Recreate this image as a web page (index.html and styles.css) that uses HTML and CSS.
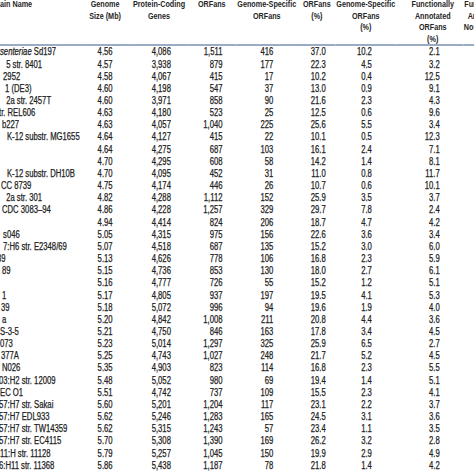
FILE: index.html
```html
<!DOCTYPE html>
<html>
<head>
<meta charset="utf-8">
<link rel="stylesheet" href="styles.css">
</head>
<body>
<table class="orf">
<colgroup>
<col class="w-strain"><col class="w-size"><col class="w-genes"><col class="w-orf"><col class="w-gs"><col class="w-pct"><col class="w-gspct"><col class="w-fa"><col class="w-fan">
</colgroup>
<thead>
<tr>
<th class="h-strain">ain Name</th>
<th>Genome<br>Size (Mb)</th>
<th>Protein-Coding<br>Genes</th>
<th>ORFans</th>
<th>Genome-Specific<br>ORFans</th>
<th>ORFans<br>(%)</th>
<th>Genome-Specific<br>ORFans<br>(%)</th>
<th class="h-fa">Functionally<br>Annotated<br>ORFans<br>(%)</th>
<th class="h-fan">Functionally<br>Annotated<br>Non-specific<br>(%)</th>
</tr>
</thead>
<tbody>
<tr><td class="s i0"><i>senteriae</i> Sd197</td><td class="c">4.56</td><td class="g">4,086</td><td class="o">1,511</td><td class="gs">416</td><td class="p">37.0</td><td class="gp">10.2</td><td class="fa">2.1</td><td></td></tr>
<tr><td class="s i6">5 str. 8401</td><td class="c">4.57</td><td class="g">3,938</td><td class="o">879</td><td class="gs">177</td><td class="p">22.3</td><td class="gp">4.5</td><td class="fa">3.2</td><td></td></tr>
<tr><td class="s i3">2952</td><td class="c">4.58</td><td class="g">4,067</td><td class="o">415</td><td class="gs">17</td><td class="p">10.2</td><td class="gp">0.4</td><td class="fa">12.5</td><td></td></tr>
<tr><td class="s i5">1 (DE3)</td><td class="c">4.60</td><td class="g">4,198</td><td class="o">547</td><td class="gs">37</td><td class="p">13.0</td><td class="gp">0.9</td><td class="fa">9.1</td><td></td></tr>
<tr><td class="s i6">2a str. 2457T</td><td class="c">4.60</td><td class="g">3,971</td><td class="o">858</td><td class="gs">90</td><td class="p">21.6</td><td class="gp">2.3</td><td class="fa">4.3</td><td></td></tr>
<tr><td class="s im1">tr. REL606</td><td class="c">4.63</td><td class="g">4,180</td><td class="o">523</td><td class="gs">25</td><td class="p">12.5</td><td class="gp">0.6</td><td class="fa">9.6</td><td></td></tr>
<tr><td class="s i2">b227</td><td class="c">4.63</td><td class="g">4,057</td><td class="o">1,040</td><td class="gs">225</td><td class="p">25.6</td><td class="gp">5.5</td><td class="fa">3.4</td><td></td></tr>
<tr><td class="s i7">K-12 substr. MG1655</td><td class="c">4.64</td><td class="g">4,127</td><td class="o">415</td><td class="gs">22</td><td class="p">10.1</td><td class="gp">0.5</td><td class="fa">12.3</td><td></td></tr>
<tr><td class="s"></td><td class="c">4.64</td><td class="g">4,275</td><td class="o">687</td><td class="gs">103</td><td class="p">16.1</td><td class="gp">2.4</td><td class="fa">7.1</td><td></td></tr>
<tr><td class="s"></td><td class="c">4.70</td><td class="g">4,295</td><td class="o">608</td><td class="gs">58</td><td class="p">14.2</td><td class="gp">1.4</td><td class="fa">8.1</td><td></td></tr>
<tr><td class="s i7">K-12 substr. DH10B</td><td class="c">4.70</td><td class="g">4,095</td><td class="o">452</td><td class="gs">31</td><td class="p">11.0</td><td class="gp">0.8</td><td class="fa">11.7</td><td></td></tr>
<tr><td class="s i1">CC 8739</td><td class="c">4.75</td><td class="g">4,174</td><td class="o">446</td><td class="gs">26</td><td class="p">10.7</td><td class="gp">0.6</td><td class="fa">10.1</td><td></td></tr>
<tr><td class="s i6">2a str. 301</td><td class="c">4.82</td><td class="g">4,288</td><td class="o">1,112</td><td class="gs">152</td><td class="p">25.9</td><td class="gp">3.5</td><td class="fa">3.7</td><td></td></tr>
<tr><td class="s i2">CDC 3083–94</td><td class="c">4.86</td><td class="g">4,228</td><td class="o">1,257</td><td class="gs">329</td><td class="p">29.7</td><td class="gp">7.8</td><td class="fa">2.4</td><td></td></tr>
<tr><td class="s"></td><td class="c">4.94</td><td class="g">4,414</td><td class="o">824</td><td class="gs">206</td><td class="p">18.7</td><td class="gp">4.7</td><td class="fa">4.2</td><td></td></tr>
<tr><td class="s i3">s046</td><td class="c">5.05</td><td class="g">4,315</td><td class="o">975</td><td class="gs">156</td><td class="p">22.6</td><td class="gp">3.6</td><td class="fa">3.4</td><td></td></tr>
<tr><td class="s i3">7:H6 str. E2348/69</td><td class="c">5.07</td><td class="g">4,518</td><td class="o">687</td><td class="gs">135</td><td class="p">15.2</td><td class="gp">3.0</td><td class="fa">6.0</td><td></td></tr>
<tr><td class="s im3">39</td><td class="c">5.13</td><td class="g">4,626</td><td class="o">778</td><td class="gs">106</td><td class="p">16.8</td><td class="gp">2.3</td><td class="fa">5.9</td><td></td></tr>
<tr><td class="s i2">89</td><td class="c">5.15</td><td class="g">4,736</td><td class="o">853</td><td class="gs">130</td><td class="p">18.0</td><td class="gp">2.7</td><td class="fa">6.1</td><td></td></tr>
<tr><td class="s"></td><td class="c">5.16</td><td class="g">4,777</td><td class="o">726</td><td class="gs">55</td><td class="p">15.2</td><td class="gp">1.2</td><td class="fa">5.1</td><td></td></tr>
<tr><td class="s i2">1</td><td class="c">5.17</td><td class="g">4,805</td><td class="o">937</td><td class="gs">197</td><td class="p">19.5</td><td class="gp">4.1</td><td class="fa">5.3</td><td></td></tr>
<tr><td class="s i1">39</td><td class="c">5.18</td><td class="g">5,072</td><td class="o">996</td><td class="gs">94</td><td class="p">19.6</td><td class="gp">1.9</td><td class="fa">4.0</td><td></td></tr>
<tr><td class="s i2">a</td><td class="c">5.20</td><td class="g">4,842</td><td class="o">1,008</td><td class="gs">211</td><td class="p">20.8</td><td class="gp">4.4</td><td class="fa">3.6</td><td></td></tr>
<tr><td class="s i0">S-3-5</td><td class="c">5.21</td><td class="g">4,750</td><td class="o">846</td><td class="gs">163</td><td class="p">17.8</td><td class="gp">3.4</td><td class="fa">4.5</td><td></td></tr>
<tr><td class="s i0">073</td><td class="c">5.23</td><td class="g">5,014</td><td class="o">1,297</td><td class="gs">325</td><td class="p">25.9</td><td class="gp">6.5</td><td class="fa">2.7</td><td></td></tr>
<tr><td class="s i1">377A</td><td class="c">5.25</td><td class="g">4,743</td><td class="o">1,027</td><td class="gs">248</td><td class="p">21.7</td><td class="gp">5.2</td><td class="fa">4.5</td><td></td></tr>
<tr><td class="s i2">N026</td><td class="c">5.35</td><td class="g">4,903</td><td class="o">823</td><td class="gs">114</td><td class="p">16.8</td><td class="gp">2.3</td><td class="fa">5.5</td><td></td></tr>
<tr><td class="s im1">03:H2 str. 12009</td><td class="c">5.48</td><td class="g">5,052</td><td class="o">980</td><td class="gs">69</td><td class="p">19.4</td><td class="gp">1.4</td><td class="fa">5.1</td><td></td></tr>
<tr><td class="s i0">EC O1</td><td class="c">5.51</td><td class="g">4,742</td><td class="o">737</td><td class="gs">109</td><td class="p">15.5</td><td class="gp">2.3</td><td class="fa">4.1</td><td></td></tr>
<tr><td class="s im1">57:H7 str. Sakai</td><td class="c">5.60</td><td class="g">5,201</td><td class="o">1,204</td><td class="gs">117</td><td class="p">23.1</td><td class="gp">2.2</td><td class="fa">3.7</td><td></td></tr>
<tr><td class="s im1">57:H7 EDL933</td><td class="c">5.62</td><td class="g">5,246</td><td class="o">1,283</td><td class="gs">165</td><td class="p">24.5</td><td class="gp">3.1</td><td class="fa">3.6</td><td></td></tr>
<tr><td class="s im1">57:H7 str. TW14359</td><td class="c">5.62</td><td class="g">5,315</td><td class="o">1,243</td><td class="gs">57</td><td class="p">23.4</td><td class="gp">1.1</td><td class="fa">3.5</td><td></td></tr>
<tr><td class="s im1">57:H7 str. EC4115</td><td class="c">5.70</td><td class="g">5,308</td><td class="o">1,390</td><td class="gs">169</td><td class="p">26.2</td><td class="gp">3.2</td><td class="fa">2.8</td><td></td></tr>
<tr><td class="s i0">11:H str. 11128</td><td class="c">5.79</td><td class="g">5,257</td><td class="o">1,045</td><td class="gs">150</td><td class="p">19.9</td><td class="gp">2.9</td><td class="fa">4.9</td><td></td></tr>
<tr><td class="s im1">6:H11 str. 11368</td><td class="c">5.86</td><td class="g">5,438</td><td class="o">1,187</td><td class="gs">78</td><td class="p">21.8</td><td class="gp">1.4</td><td class="fa">4.2</td><td></td></tr>
</tbody>
</table>
</body>
</html>
```

FILE: styles.css
```css
html, body {
  margin: 0;
  padding: 0;
  background: #ffffff;
  overflow: hidden;
}

/* The table is set in a horizontally condensed face: the layout is drawn
   at full width and compressed to 77% along x. */
.orf {
  border-collapse: separate;
  border-spacing: 0;
  table-layout: fixed;
  width: 665px;
  margin-top: -2px;
  transform: scaleX(0.77);
  transform-origin: 0 0;
  font-family: "Liberation Sans", Arial, sans-serif;
  color: #222222;
}

.w-strain { width: 104px; }
.w-size { width: 65px; }
.w-genes { width: 75px; }
.w-orf { width: 62px; }
.w-gs { width: 81px; }
.w-pct { width: 49px; }
.w-gspct { width: 78px; }
.w-fa { width: 88px; }
.w-fan { width: 63px; }

.orf th {
  font-weight: bold;
  font-size: 9.4px;
  line-height: 11.6px;
  height: 46.4px;
  vertical-align: top;
  text-align: center;
  padding: 0;
  white-space: nowrap;
  border-bottom: 2px solid #9aabc6;
  color: #262626;
}

.orf th.h-strain { text-align: left; }
.orf th.h-fa { padding-left: 8px; }
.orf th.h-fan { padding-right: 6px; }

.orf td {
  font-size: 10px;
  line-height: 12.15px;
  height: 12.15px;
  padding: 0;
  white-space: nowrap;
  -webkit-text-stroke: 0.25px #222222;
}

.orf td.s { text-align: left; }
.orf td.c { text-align: center; }
.orf td.g { text-align: right; padding-right: 22px; }
.orf td.o { text-align: right; padding-right: 17px; }
.orf td.gs { text-align: right; padding-right: 32px; }
.orf td.p { text-align: right; padding-right: 13px; }
.orf td.gp { text-align: right; padding-right: 31px; }
.orf td.fa { text-align: right; padding-right: 31px; }

.im3 { text-indent: -4px; }
.im1 { text-indent: -1.3px; }
.i0 { text-indent: 0; }
.i1 { text-indent: 1.3px; }
.i2 { text-indent: 2.6px; }
.i3 { text-indent: 4px; }
.i5 { text-indent: 6.5px; }
.i6 { text-indent: 8px; }
.i7 { text-indent: 9px; }
```
